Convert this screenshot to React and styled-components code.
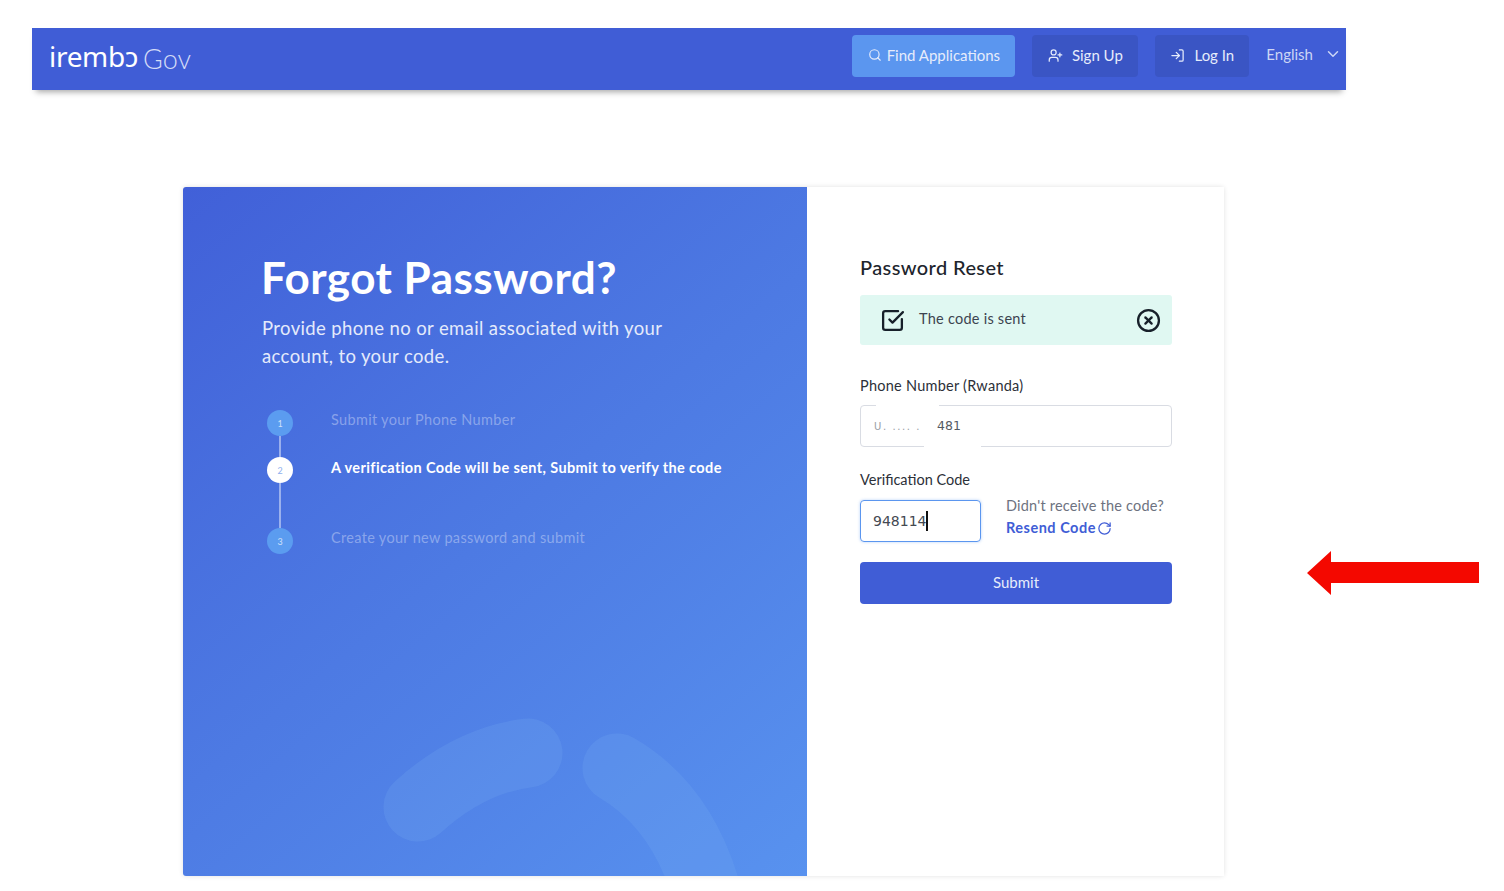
import styled, { createGlobalStyle } from 'styled-components';
import { Search, UserPlus, LogIn, ChevronDown, SquareCheckBig, CircleX, RotateCw } from 'lucide-react';

const GlobalStyle = createGlobalStyle`
  html, body {
    margin: 0;
    background: #fff;
    overflow: hidden;
  }
  body {
    font-family: Lato, "Noto Sans", sans-serif;
  }
`;

const steps = [
  { id: 1, text: 'Submit your Phone Number', height: 47 },
  { id: 2, text: 'A verification Code will be sent, Submit to verify the code', height: 71, active: true },
  { id: 3, text: 'Create your new password and submit', height: 26 },
];

const App = () => {
  return (
    <Page>
      <GlobalStyle />
      <Nav>
        <Logo>
          <LogoMark>irembɔ</LogoMark>
          <LogoGov>Gov</LogoGov>
        </Logo>
        <NavActions>
          <NavButton $primary $width={163}>
            <Search size={14} />
            Find Applications
          </NavButton>
          <NavButton $width={106}>
            <UserPlus size={15} />
            Sign Up
          </NavButton>
          <NavButton $width={94}>
            <LogIn size={15} />
            Log In
          </NavButton>
          <Language>
            English
            <ChevronDown size={18} />
          </Language>
        </NavActions>
      </Nav>

      <Card>
        <Intro>
          <Swirl viewBox="0 0 624 689">
            <path d="M235 620 Q287 573 345 566" />
            <path d="M434 581 Q497 618 522 700" />
          </Swirl>
          <Heading>Forgot Password?</Heading>
          <Lead>
            Provide phone no or email associated with your
            <br />
            account, to your code.
          </Lead>
          <Steps>
            {steps.map((step, i) => (
              <Step key={step.id} $height={step.height}>
                <Marker>
                  <Dot $active={step.active}>{step.id}</Dot>
                  {i < steps.length - 1 && <Line />}
                </Marker>
                <StepText $active={step.active}>{step.text}</StepText>
              </Step>
            ))}
          </Steps>
        </Intro>

        <FormPanel>
          <FormTitle>Password Reset</FormTitle>
          <Alert>
            <SquareCheckBig size={25} strokeWidth={2.2} color="#17202a" />
            <AlertText>The code is sent</AlertText>
            <CircleX size={25} strokeWidth={2.2} color="#17202a" />
          </Alert>

          <Label $top={32}>Phone Number (Rwanda)</Label>
          <PhoneBox>
            <Masked>U. .... .</Masked>
            <PhoneEnd>481</PhoneEnd>
            <Patch $left={15} $top={-1} $width={63} />
            <Patch $left={63} $top={40} $width={57} />
          </PhoneBox>

          <Label $top={24} $tight>Verification Code</Label>
          <CodeRow>
            <CodeBox>
              948114
              <Caret />
            </CodeBox>
            <Resend>
              <ResendHint>Didn't receive the code?</ResendHint>
              <ResendLink>
                Resend Code
                <RotateCw size={15} />
              </ResendLink>
            </Resend>
          </CodeRow>
          <Submit>Submit</Submit>
        </FormPanel>
      </Card>

      <Arrow viewBox="0 0 172 44">
        <polygon points="0,22 24,0 24,11 172,11 172,32 24,32 24,44" />
      </Arrow>
    </Page>
  );
};

export default App;

const Page = styled.div`
  position: relative;
  width: 1504px;
  height: 891px;
  padding: 28px 0 0 32px;
  box-sizing: border-box;
`;

const Nav = styled.header`
  width: 1314px;
  height: 62px;
  padding: 0 4px 6px 17px;
  box-sizing: border-box;
  display: flex;
  align-items: center;
  justify-content: space-between;
  background: #405dd6;
  box-shadow: 0 6px 6px -4px rgba(0, 0, 0, 0.35);
`;

const Logo = styled.div`
  margin-top: -1px;
  color: #fff;
`;

const LogoMark = styled.span`
  font-family: "Noto Sans", sans-serif;
  font-size: 28px;
  font-weight: 400;
  letter-spacing: -0.3px;
  vertical-align: 2px;
`;

const LogoGov = styled.span`
  margin-left: 5px;
  font-size: 27px;
  font-weight: 300;
  color: #d3dbf6;
`;

const NavActions = styled.nav`
  display: flex;
  align-items: center;
  gap: 17px;
`;

const NavButton = styled.button`
  width: ${(p) => p.$width}px;
  height: 42px;
  padding: 0 0 2px;
  display: flex;
  align-items: center;
  justify-content: center;
  gap: ${(p) => (p.$primary ? 5 : 9)}px;
  border: none;
  border-radius: 4px;
  background: ${(p) => (p.$primary ? '#5b96ef' : '#3a55c4')};
  color: #e6ecfb;
  font-family: inherit;
  font-size: 15px;
`;

const Language = styled.div`
  display: flex;
  align-items: center;
  gap: 11px;
  margin-top: -5px;
  color: #ccd6f5;
  font-size: 15px;
`;

const Card = styled.main`
  width: 1041px;
  height: 689px;
  margin: 97px 0 0 151px;
  display: flex;
  border-radius: 3px;
  box-shadow: 0 0 5px rgba(0, 0, 0, 0.12);
`;

const Intro = styled.section`
  position: relative;
  width: 624px;
  padding: 61px 0 0 79px;
  box-sizing: border-box;
  overflow: hidden;
  border-radius: 3px 0 0 3px;
  background: linear-gradient(140deg, #4160d8 0%, #4d7ae3 50%, #5892ef 100%);
  color: #fff;
`;

const Swirl = styled.svg`
  position: absolute;
  inset: 0;
  width: 100%;
  height: 100%;
  fill: none;
  stroke: rgba(120, 175, 240, 0.22);
  stroke-width: 69;
  stroke-linecap: round;
`;

const Heading = styled.h1`
  margin: 0 0 0 -1px;
  font-size: 44px;
  line-height: 58px;
  font-weight: 700;
  letter-spacing: 0.5px;
`;

const Lead = styled.p`
  margin: 8px 0 0;
  font-size: 18.5px;
  line-height: 28px;
  letter-spacing: 0.37px;
  color: #e4eafb;
`;

const Steps = styled.ol`
  margin: 40px 0 0 5px;
  padding: 0;
  list-style: none;
`;

const Step = styled.li`
  height: ${(p) => p.$height}px;
  display: flex;
  gap: 38px;
`;

const Marker = styled.div`
  width: 26px;
  display: flex;
  flex-direction: column;
  align-items: center;
`;

const Dot = styled.span`
  flex: none;
  width: 26px;
  height: 26px;
  display: flex;
  align-items: center;
  justify-content: center;
  border-radius: 50%;
  background: ${(p) => (p.$active ? '#fff' : '#5b9cf0')};
  color: ${(p) => (p.$active ? '#8fb0ee' : '#cfe0fa')};
  font-size: 9px;
`;

const Line = styled.span`
  flex: 1;
  width: 2px;
  background: rgba(255, 255, 255, 0.45);
`;

const StepText = styled.span`
  font-size: 14.5px;
  line-height: 20px;
  letter-spacing: ${(p) => (p.$active ? 0.38 : 0.32)}px;
  font-weight: ${(p) => (p.$active ? 700 : 400)};
  color: ${(p) => (p.$active ? '#fff' : 'rgba(255, 255, 255, 0.36)')};
  padding-top: ${(p) => (p.$active ? 1 : 0)}px;
`;

const FormPanel = styled.section`
  flex: 1;
  padding: 69px 52px 0 53px;
  background: #fff;
`;

const FormTitle = styled.h2`
  margin: 0;
  font-size: 20px;
  line-height: 22px;
  font-weight: 500;
  letter-spacing: 0.4px;
  color: #20242c;
`;

const Alert = styled.div`
  height: 50px;
  margin-top: 17px;
  padding: 0 11px 0 20px;
  display: flex;
  align-items: center;
  border-radius: 3px;
  background: #e0f8f2;
`;

const AlertText = styled.span`
  flex: 1;
  margin: -4px 0 0 14px;
  font-size: 14.5px;
  letter-spacing: 0.25px;
  color: #3c4450;
`;

const Label = styled.label`
  display: block;
  margin-top: ${(p) => p.$top}px;
  font-size: 14.5px;
  line-height: 18px;
  letter-spacing: ${(p) => (p.$tight ? 0 : 0.25)}px;
  color: #2c3038;
`;

const PhoneBox = styled.div`
  position: relative;
  height: 42px;
  margin-top: 10px;
  padding-left: 13px;
  box-sizing: border-box;
  display: flex;
  align-items: center;
  border: 1px solid #d9dce3;
  border-radius: 4px;
  font-family: "DejaVu Sans", sans-serif;
`;

const Masked = styled.span`
  width: 63px;
  font-size: 10px;
  letter-spacing: 1.6px;
  color: #9a9ea6;
`;

const PhoneEnd = styled.span`
  margin-top: -2px;
  font-size: 12.5px;
  color: #555a63;
`;

const Patch = styled.span`
  position: absolute;
  left: ${(p) => p.$left}px;
  top: ${(p) => p.$top}px;
  width: ${(p) => p.$width}px;
  height: 3px;
  background: #fff;
`;

const CodeRow = styled.div`
  margin-top: 11px;
  display: flex;
  gap: 25px;
`;

const CodeBox = styled.div`
  width: 121px;
  height: 42px;
  padding-left: 12px;
  box-sizing: border-box;
  display: flex;
  align-items: center;
  border: 1px solid #5b96ef;
  border-radius: 4px;
  box-shadow: 0 0 3px rgba(91, 150, 239, 0.45);
  font-family: "DejaVu Sans", sans-serif;
  font-size: 14px;
  color: #444952;
`;

const Caret = styled.span`
  width: 1.5px;
  height: 20px;
  background: #111;
`;

const Resend = styled.div`
  margin-top: -5px;
  font-size: 14.5px;
  line-height: 22px;
`;

const ResendHint = styled.div`
  letter-spacing: 0.2px;
  color: #6d7280;
`;

const ResendLink = styled.a`
  display: flex;
  align-items: center;
  gap: 1px;
  font-weight: 700;
  letter-spacing: 0.5px;
  color: #405dd6;
`;

const Submit = styled.button`
  width: 100%;
  height: 42px;
  margin-top: 20px;
  padding: 0 0 2px;
  border: none;
  border-radius: 4px;
  background: #405dd6;
  color: #e6ecfb;
  font-family: inherit;
  font-size: 15px;
`;

const Arrow = styled.svg`
  position: absolute;
  left: 1307px;
  top: 551px;
  width: 172px;
  height: 44px;
  fill: #f40800;
`;
